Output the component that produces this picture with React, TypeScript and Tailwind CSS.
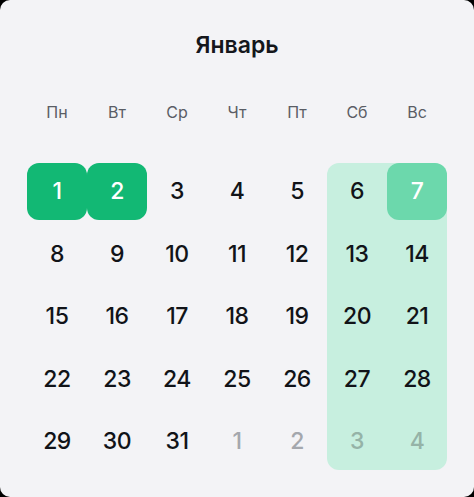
const weekdays = ['Пн', 'Вт', 'Ср', 'Чт', 'Пт', 'Сб', 'Вс']

type Day = { n: number; muted?: boolean; tone?: 'strong' | 'soft' }

const weeks: Day[][] = [
  [{ n: 1, tone: 'strong' }, { n: 2, tone: 'strong' }, { n: 3 }, { n: 4 }, { n: 5 }, { n: 6 }, { n: 7, tone: 'soft' }],
  [{ n: 8 }, { n: 9 }, { n: 10 }, { n: 11 }, { n: 12 }, { n: 13 }, { n: 14 }],
  [{ n: 15 }, { n: 16 }, { n: 17 }, { n: 18 }, { n: 19 }, { n: 20 }, { n: 21 }],
  [{ n: 22 }, { n: 23 }, { n: 24 }, { n: 25 }, { n: 26 }, { n: 27 }, { n: 28 }],
  [{ n: 29 }, { n: 30 }, { n: 31 }, { n: 1, muted: true }, { n: 2, muted: true }, { n: 3, muted: true }, { n: 4, muted: true }],
]

function Cell({ day, weekend }: { day: Day; weekend?: boolean }) {
  let cls = 'text-[#111318]'
  if (day.tone === 'strong') cls = 'bg-[#12b874] text-white rounded-[12px]'
  if (day.tone === 'soft') cls = 'bg-[#6cd8ac] text-white rounded-[12px]'
  if (day.muted) cls = weekend ? 'text-[#95b3a7]' : 'text-[#a4a7ad]'
  return (
    <div className={`flex h-[57px] w-[60px] items-center justify-center text-[23px] font-medium tracking-[-0.5px] ${cls}`}>
      {day.n}
    </div>
  )
}

function Column({ col }: { col: number }) {
  return (
    <div className="flex w-[60px] flex-col gap-[5.5px]">
      {weeks.map((w, i) => (
        <Cell key={i} day={w[col]} weekend={col >= 5} />
      ))}
    </div>
  )
}

export default function App() {
  return (
    <div className="h-[497px] w-[474px] bg-black" style={{ fontFamily: 'Inter, "Noto Sans", sans-serif' }}>
      <div className="flex h-[497px] w-[474px] flex-col rounded-[10px] bg-[#f3f3f6]">
        <h1 className="pt-[30px] text-center text-[23px] font-semibold leading-[30px] text-[#15171c]">
          Январь
        </h1>

        <div className="mt-[41px] flex px-[27px]">
          {weekdays.map((d) => (
            <div key={d} className="w-[60px] text-center text-[16px] leading-[22px] text-[#5a5d65]">
              {d}
            </div>
          ))}
        </div>

        <div className="mt-[40px] flex px-[27px]">
          {[0, 1, 2, 3, 4].map((c) => (
            <Column key={c} col={c} />
          ))}
          <div className="flex rounded-[12px] bg-[#c7efdf]">
            <Column col={5} />
            <Column col={6} />
          </div>
        </div>
      </div>
    </div>
  )
}
